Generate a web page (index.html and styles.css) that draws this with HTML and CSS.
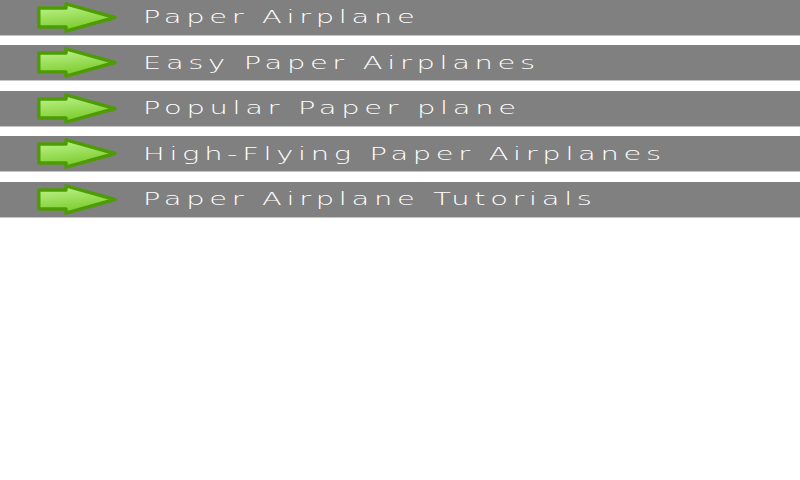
FILE: index.html
```html
<!DOCTYPE html>
<html>
<head>
<meta charset="utf-8">
<link rel="stylesheet" href="styles.css">
</head>
<body>
<ul class="menu">
  <li class="menu-item">
    <svg class="arrow" viewBox="0 0 80 31"><defs><linearGradient id="g" x1="0" y1="0" x2="0.3" y2="1"><stop offset="0" stop-color="#c2f591"/><stop offset="1" stop-color="#7acb2c"/></linearGradient></defs><path d="M1.8 6 H29 V1.8 L78 15.5 L29 29.2 V25 H1.8 Z" fill="url(#g)" stroke="#4e9c05" stroke-width="3.4" stroke-linejoin="round"/></svg>
    <span class="label">Paper Airplane</span>
  </li>
  <li class="menu-item">
    <svg class="arrow" viewBox="0 0 80 31"><path d="M1.8 6 H29 V1.8 L78 15.5 L29 29.2 V25 H1.8 Z" fill="url(#g)" stroke="#4e9c05" stroke-width="3.4" stroke-linejoin="round"/></svg>
    <span class="label">Easy Paper Airplanes</span>
  </li>
  <li class="menu-item">
    <svg class="arrow" viewBox="0 0 80 31"><path d="M1.8 6 H29 V1.8 L78 15.5 L29 29.2 V25 H1.8 Z" fill="url(#g)" stroke="#4e9c05" stroke-width="3.4" stroke-linejoin="round"/></svg>
    <span class="label">Popular Paper plane</span>
  </li>
  <li class="menu-item">
    <svg class="arrow" viewBox="0 0 80 31"><path d="M1.8 6 H29 V1.8 L78 15.5 L29 29.2 V25 H1.8 Z" fill="url(#g)" stroke="#4e9c05" stroke-width="3.4" stroke-linejoin="round"/></svg>
    <span class="label">High-Flying Paper Airplanes</span>
  </li>
  <li class="menu-item">
    <svg class="arrow" viewBox="0 0 80 31"><path d="M1.8 6 H29 V1.8 L78 15.5 L29 29.2 V25 H1.8 Z" fill="url(#g)" stroke="#4e9c05" stroke-width="3.4" stroke-linejoin="round"/></svg>
    <span class="label">Paper Airplane Tutorials</span>
  </li>
</ul>
</body>
</html>
```
FILE: styles.css
```css
html, body {
  margin: 0;
  padding: 0;
  background: #ffffff;
}

.menu {
  list-style: none;
  margin: -0.5px 0 0 0;
  padding: 0;
  display: flex;
  flex-direction: column;
  gap: 9.5px;
}

.menu-item {
  height: 35px;
  background: #808080;
  border-bottom: 1px solid #c4c4c4;
  display: flex;
  align-items: center;
  padding-left: 37px;
}

.arrow {
  width: 80px;
  height: 31px;
  flex: none;
}

/* wide, airy lettering: a stretched sans with open tracking */
.label {
  display: inline-block;
  margin-left: 26px;
  font-family: "DejaVu Sans", sans-serif;
  font-weight: 200;
  font-size: 17px;
  letter-spacing: 2.75px;
  color: #ffffff;
  white-space: nowrap;
  transform: scaleX(1.7);
  transform-origin: left center;
}
```
